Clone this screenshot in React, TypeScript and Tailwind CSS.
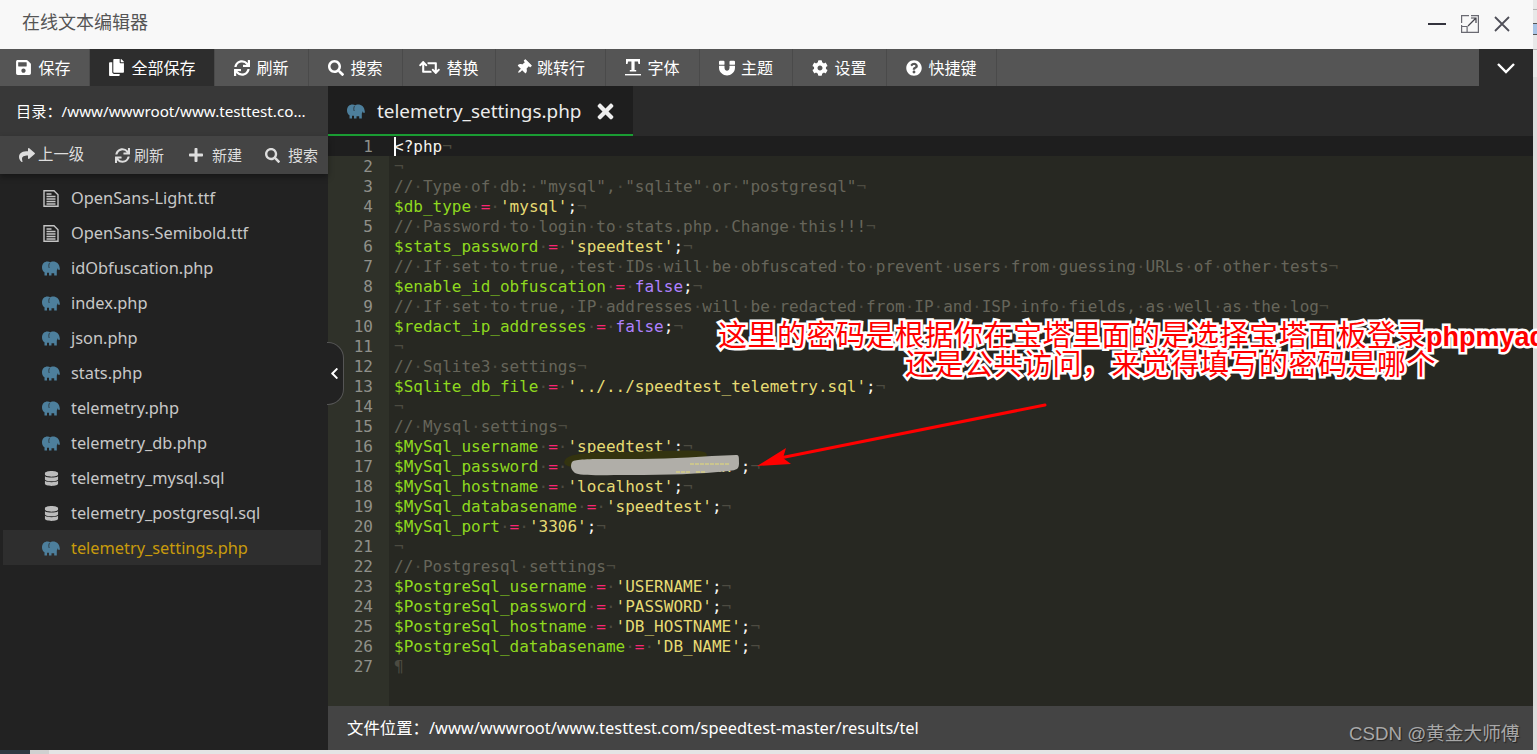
import React from 'react';
import {
  FaSave, FaCopy, FaSync, FaSearch, FaRetweet, FaThumbtack, FaMagnet, FaCog, FaQuestionCircle,
  FaShare, FaPlus, FaDatabase, FaTimes, FaChevronLeft,
} from 'react-icons/fa';

const uiFont = "font-['Noto_Sans','Noto_Sans_CJK_SC',sans-serif]";

const FontIcon = () => (
  <svg width="16" height="17" viewBox="0 0 16 17" fill="currentColor">
    <path d="M1 0h14v5h-1.500l-.6-2.600H9.600V11h1.600v1.400H4.800V11h1.600V2.400H3.100L2.500 5H1z" />
    <path d="M0 15h16v1.400H0z" />
  </svg>
);

const Elephant = () => (
  <svg width="18" height="15" viewBox="0 0 18 15" fill="#4d7f9c" className="shrink-0">
    <path d="M0 6.500C0 2.500 2.500 0.500 5.500 0.500c1.200 0 2 .3 2.600.8.8-.5 1.600-.8 2.900-.8 3.800 0 6 2.400 6.500 5.500.2 1.200.4 2 .5 2.600l-1.500.4c-.3-.7-.5-1.400-.8-1.800-.2.800-.4 1.600-.9 2.300V14.500h-2.600v-2.300H9.500v2.300H7v-2.800c-.7.200-1.400.200-2 0v2.800H2.500v-3.300C.9 10.400 0 8.700 0 6.500z" />
    <path d="M7.700 1.800c-1 1.200-1.200 3.500-.5 5.200" stroke="#222" strokeWidth=".7" fill="none" />
  </svg>
);

const FileIcon = () => (
  <svg width="16" height="17" viewBox="0 0 16 17" fill="none" stroke="#c4c4c4" className="shrink-0">
    <path d="M1 .7h10l4 4v11.600H1z" strokeWidth="1.400" />
    <path d="M3.500 6.500h9M3.500 9h9M3.500 11.500h9M3.500 14h9M3.500 4h5" strokeWidth="1.300" />
  </svg>
);

const tools: { label: string; icon: React.ReactNode; width: string; active?: boolean }[] = [
  { label: '保存', icon: <FaSave size={17} />, width: 'w-[90px] pr-[3px]' },
  { label: '全部保存', icon: <FaCopy size={17} />, width: 'w-[125px]', active: true },
  { label: '刷新', icon: <FaSync size={16} />, width: 'w-[94px]' },
  { label: '搜索', icon: <FaSearch size={16} />, width: 'w-[94px]' },
  { label: '替换', icon: <FaRetweet size={21} />, width: 'w-[93px]' },
  { label: '跳转行', icon: <FaThumbtack size={15} className="rotate-45" />, width: 'w-[110px]' },
  { label: '字体', icon: <FontIcon />, width: 'w-[94px]' },
  { label: '主题', icon: <FaMagnet size={16} />, width: 'w-[93px]' },
  { label: '设置', icon: <FaCog size={16} />, width: 'w-[94px]' },
  { label: '快捷键', icon: <FaQuestionCircle size={16} />, width: 'w-[110px]' },
];

const files = [
  { name: 'OpenSans-Light.ttf', kind: 'text' },
  { name: 'OpenSans-Semibold.ttf', kind: 'text' },
  { name: 'idObfuscation.php', kind: 'php' },
  { name: 'index.php', kind: 'php' },
  { name: 'json.php', kind: 'php' },
  { name: 'stats.php', kind: 'php' },
  { name: 'telemetry.php', kind: 'php' },
  { name: 'telemetry_db.php', kind: 'php' },
  { name: 'telemetry_mysql.sql', kind: 'db' },
  { name: 'telemetry_postgresql.sql', kind: 'db' },
  { name: 'telemetry_settings.php', kind: 'php', active: true },
];

const code = [
  '<?php',
  '',
  '// Type of db: "mysql", "sqlite" or "postgresql"',
  "$db_type = 'mysql';",
  '// Password to login to stats.php. Change this!!!',
  "$stats_password = 'speedtest';",
  '// If set to true, test IDs will be obfuscated to prevent users from guessing URLs of other tests',
  '$enable_id_obfuscation = false;',
  '// If set to true, IP addresses will be redacted from IP and ISP info fields, as well as the log',
  '$redact_ip_addresses = false;',
  '',
  '// Sqlite3 settings',
  "$Sqlite_db_file = '../../speedtest_telemetry.sql';",
  '',
  '// Mysql settings',
  "$MySql_username = 'speedtest';",
  "$MySql_password = 'xxxxxxxxxxxxxxxx';",
  "$MySql_hostname = 'localhost';",
  "$MySql_databasename = 'speedtest';",
  "$MySql_port = '3306';",
  '',
  '// Postgresql settings',
  "$PostgreSql_username = 'USERNAME';",
  "$PostgreSql_password = 'PASSWORD';",
  "$PostgreSql_hostname = 'DB_HOSTNAME';",
  "$PostgreSql_databasename = 'DB_NAME';",
];

const Dim = ({ children }: { children: React.ReactNode }) => <span className="text-[#4c4b41]">{children}</span>;

// splits a php line into coloured pieces, the editor shows invisibles so spaces become dots
const CodeLine = ({ text }: { text: string }) => {
  if (text.startsWith('//')) {
    return (
      <>
        {text.split(' ').map((word, i) => (
          <span key={i}>
            {i > 0 && <Dim>·</Dim>}
            <span className="text-[#66655a]">{word}</span>
          </span>
        ))}
        <Dim>¬</Dim>
      </>
    );
  }
  if (text === '<?php') {
    return (
      <>
        <span className="text-[#f4f4ee]">{text}</span>
        <Dim>¬</Dim>
      </>
    );
  }
  if (text === '') return <Dim>¬</Dim>;
  const [name, value] = text.split(' = ');
  const val = value.slice(0, -1);
  return (
    <>
      <span className="text-[#8fd91f]">{name}</span>
      <Dim>·</Dim>
      <span className="text-[#f92672]">=</span>
      <Dim>·</Dim>
      <span className={val === 'false' ? 'text-[#ae81ff]' : 'text-[#e6db74]'}>{val}</span>
      <span className="text-[#f8f8f2]">;</span>
      <Dim>¬</Dim>
    </>
  );
};

const App = () => {
  return (
    <div className={`relative flex h-screen w-full flex-col overflow-hidden bg-[#ececec] ${uiFont}`}>
      <div className="flex min-h-0 flex-1">
        <div className="flex w-[1533px] shrink-0 flex-col">
          {/* title bar */}
          <div className="flex h-[49px] shrink-0 items-center justify-between bg-[#f8f8f8] pl-[22px] pr-[23px]">
            <span className="mt-[-4px] text-[18px] text-[#555555]">在线文本编辑器</span>
            <div className="mt-[-2px] flex items-center gap-[15px] text-[#4b4b55]">
              <div className="h-[2px] w-[18px] bg-[#33333d]" />
              <svg width="18" height="18" viewBox="0 0 18 18" fill="none" stroke="#6a6a72" strokeWidth="1.200">
                <path d="M10 .6h7.400v16.800H.6V10" />
                <path d="M.6 8V.6H8" />
                <path d="M7 11l8-8M10 3h5v5" stroke="#44444c" />
                <path d="M.6 11.500h5.500v5.900" />
              </svg>
              <svg width="16" height="16" viewBox="0 0 16 16" stroke="#4f4f58" strokeWidth="1.800">
                <path d="M1 1l14 14M15 1L1 15" />
              </svg>
            </div>
          </div>

          {/* toolbar */}
          <div className="flex h-[37px] shrink-0 bg-[#555555] text-[16px] text-white">
            {tools.map((t) => (
              <div
                key={t.label}
                className={`flex items-center justify-center gap-[6px] border-r border-[#4a4a4a] ${t.width} ${t.active ? 'bg-[#2d2d2d]' : ''}`}
              >
                {t.icon}
                <span>{t.label}</span>
              </div>
            ))}
            <div className="flex-1" />
            <div className="flex w-[54px] items-center justify-center bg-[#2a2a2a]">
              <svg width="18" height="12" viewBox="0 0 18 12" fill="none" stroke="white" strokeWidth="2.400">
                <path d="M1 2l8 8 8-8" />
              </svg>
            </div>
          </div>

          <div className="flex min-h-0 flex-1">
            {/* file tree */}
            <aside className="relative flex w-[328px] shrink-0 flex-col bg-[#222222]">
              <div className="flex h-[50px] shrink-0 items-center bg-[#383838] pl-[16px] text-[15.2px] text-white">
                目录：/www/wwwroot/www.testtest.co...
              </div>
              <div className="relative flex h-[38px] shrink-0 items-center bg-[#444444] text-[15px] text-[#dddddd] shadow-[0_3px_6px_rgba(0,0,0,0.35)]">
                <div className="flex w-[96px] items-center gap-[3px] pl-[19px]"><FaShare size={16} /><span className="text-[15.4px]">上一级</span></div>
                <div className="flex w-[73px] items-center gap-[4px] pl-[19px]"><FaSync size={15} />刷新</div>
                <div className="flex w-[77px] items-center gap-[8px] pl-[19px]"><FaPlus size={16} />新建</div>
                <div className="flex items-center gap-[8px] pl-[19px]"><FaSearch size={15} />搜索</div>
              </div>
              <div className="flex flex-col pl-[3px] pr-[7px] pt-[6px]">
                {files.map((f) => (
                  <div
                    key={f.name}
                    className={`flex h-[35px] items-center gap-[11px] pl-[39px] pt-[2px] text-[16.35px] ${f.active ? 'bg-[#2e2e2e] text-[#c89b0c]' : 'text-[#c8c8c8]'}`}
                  >
                    {f.kind === 'php' && <Elephant />}
                    {f.kind === 'text' && <span className="flex w-[18px] justify-center"><FileIcon /></span>}
                    {f.kind === 'db' && <span className="flex w-[18px] justify-center text-[#bdbdbd]"><FaDatabase size={15} /></span>}
                    <span>{f.name}</span>
                  </div>
                ))}
              </div>
              <div className="absolute left-[327px] top-[256px] z-10 flex h-[63px] w-[17px] items-center rounded-r-[16px] border border-l-0 border-[#555555] bg-[#222222] text-white">
                <FaChevronLeft size={13} className="ml-[1px]" />
              </div>
            </aside>

            {/* editor */}
            <main className="flex min-w-0 flex-1 flex-col bg-[#2a2a2a]">
              <div className="flex h-[50px] shrink-0 bg-[#2a2a2a]">
                <div className="flex h-[50px] w-[305px] items-center gap-[12px] border-b-2 border-[#1a9c33] bg-[#1e1e1e] pl-[19px] pt-[2px] text-[18.9px] text-[#ececec]">
                  <Elephant />
                  <span>telemetry_settings.php</span>
                  <FaTimes size={23} className="text-[#eeeeee]" />
                </div>
              </div>
              <div className="flex min-h-0 flex-1 bg-[#272822] font-['DejaVu_Sans_Mono','Noto_Sans_CJK_SC',monospace] text-[16px] leading-[22px]">
                <div className="w-[61px] shrink-0 bg-[#2f3129] text-right text-[#8f908a]">
                  {code.concat('¶').map((_, i) => (
                    <div key={i} className={`h-[20px] pr-[16px] ${i === 0 ? 'bg-[#1e1e1e]' : ''}`}>{i + 1}</div>
                  ))}
                </div>
                <div className="min-w-0 flex-1 whitespace-pre">
                  {code.map((line, i) => (
                    <div key={i} className={`relative h-[20px] pl-[5px] ${i === 0 ? 'bg-[#1e1e1e]' : ''}`}>
                      {i === 0 && <div className="absolute left-[5px] top-[1px] h-[19px] w-[2px] bg-white" />}
                      <CodeLine text={line} />
                    </div>
                  ))}
                  <div className="h-[20px] pl-[5px]"><Dim>¶</Dim></div>
                </div>
              </div>
              <div className="flex h-[44px] shrink-0 items-center bg-[#444444] pl-[19px] text-[16.4px] text-white">
                文件位置：/www/wwwroot/www.testtest.com/speedtest-master/results/tel
              </div>
            </main>
          </div>
        </div>
        {/* sliver of the page behind the window */}
        <div className="flex flex-1 flex-col bg-[#e8e8e8] pt-[9px]">
          <div className="h-px bg-[#b4b4b4]" />
          <div className="mt-[13px] h-[12px] border-y border-[#555555] bg-[#a9c4e6]" />
          <div className="mt-[14px] h-px bg-[#b4b4b4]" />
          <div className="mt-[27px] flex-1 bg-[#dcdcdc]" />
        </div>
      </div>
      <div className="flex h-[4px] shrink-0 bg-[#e4e4e4]">
        <div className="w-[30px] bg-[#2e3a44]" />
        <div className="w-[19px] bg-[#d0d0d0]" />
      </div>

      {/* scribble over the password */}
      <svg className="absolute left-[560px] top-[448px]" width="185" height="32" viewBox="0 0 185 32">
        <path d="M5 12C9 5 30 4 70 4c40-1 70-3 76 1 4 5-6 10-30 13H20C8 20 2 17 5 12z" fill="#33330f" />
        <path d="M12 14c2-4 30-3 70-3 30 0 62-3 94-4 3 0 3 1 3 8 0 6-2 7-10 8-30 3-60 4-100 4-25 0-50 1-54-2-4-3-5-7-3-11z" fill="#b0aea8" />
        <path d="M130 16h40M116 24h14M136 24h10" stroke="#e6db74" strokeWidth="1.200" strokeDasharray="4 1" fill="none" />
      </svg>

      {/* annotation */}
      <div className="absolute left-[718px] top-[319px] font-['Noto_Sans_CJK_SC',sans-serif] text-[29px] font-normal tracking-[0.5px] whitespace-nowrap text-[#ff0000] [paint-order:stroke_fill] [-webkit-text-stroke:5px_white]">
        <div className="h-[29px] leading-[29px]">这里的密码是根据你在宝塔里面的是选择宝塔面板登录<span className="font-['Liberation_Sans'] text-[27px] font-bold tracking-normal">phpmyadmin</span></div>
        <div className="h-[29px] pl-[187px] leading-[29px]">还是公共访问，来觉得填写的密码是哪个</div>
      </div>
      <svg className="absolute left-[750px] top-[398px]" width="300" height="76" viewBox="0 0 300 76">
        <path d="M295 7L30 60" stroke="#ff0000" strokeWidth="3" strokeLinecap="round" />
        <path d="M7 68L36 50L33 60L41 66z" fill="#ff0000" />
      </svg>

      {/* watermark */}
      <div className="absolute left-[1349px] top-[720px] font-['Liberation_Sans','Noto_Sans_CJK_SC',sans-serif] text-[18.7px] text-[#a8a8a8] [text-shadow:1px_1px_1px_#222]">
        CSDN @黄金大师傅
      </div>
    </div>
  );
};

export default App;
